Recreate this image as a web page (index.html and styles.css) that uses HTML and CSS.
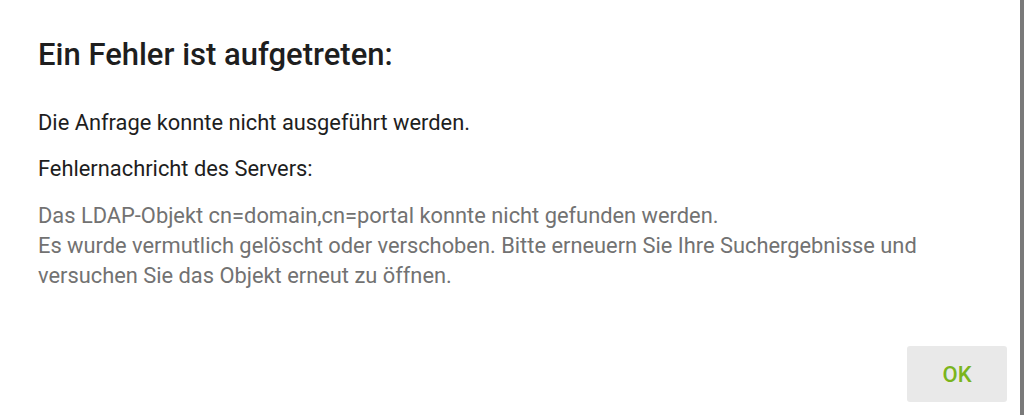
FILE: index.html
```html
<!DOCTYPE html>
<html lang="de">
<head>
<meta charset="utf-8">
<title>Fehler</title>
<link rel="stylesheet" href="styles.css">
</head>
<body>
<div class="screen">
  <div class="dialog">
    <div class="content">
      <h1 class="title">Ein Fehler ist aufgetreten:</h1>
      <p class="text">Die Anfrage konnte nicht ausgeführt werden.</p>
      <p class="text">Fehlernachricht des Servers:</p>
      <p class="text muted">Das LDAP-Objekt cn=domain,cn=portal konnte nicht gefunden werden.<br>Es wurde vermutlich gelöscht oder verschoben. Bitte erneuern Sie Ihre Suchergebnisse und versuchen Sie das Objekt erneut zu öffnen.</p>
    </div>
    <div class="actions">
      <button class="btn-ok" type="button">OK</button>
    </div>
  </div>
  <div class="edge"></div>
</div>
</body>
</html>
```

FILE: styles.css
```css
html, body {
  margin: 0;
  padding: 0;
  background: #ffffff;
}

body {
  font-family: Roboto, "Liberation Sans", Arial, sans-serif;
  width: 1024px;
  height: 415px;
  overflow: hidden;
}

.screen {
  display: grid;
  grid-template-columns: 1020px 4px;
  height: 415px;
}

.dialog {
  display: flex;
  flex-direction: column;
  justify-content: space-between;
  padding: 35px 13px 13px 38px;
  box-sizing: border-box;
  height: 415px;
}

.content {
  padding-right: 25px;
}

.title {
  margin: 0 0 33px 0;
  font-size: 31px;
  line-height: 40px;
  font-weight: 500;
  color: #1e1e1e;
}

.text {
  margin: 0 0 16px 0;
  font-size: 21.85px;
  line-height: 30px;
  color: #1e1e1e;
}

.muted {
  margin-top: 17px;
  color: #727272;
}

.actions {
  display: flex;
  justify-content: flex-end;
}

.btn-ok {
  width: 100px;
  height: 56px;
  border: none;
  border-radius: 3px;
  background: #e9e9e9;
  color: #7ab51d;
  font-family: Roboto, "Liberation Sans", Arial, sans-serif;
  font-size: 22px;
  font-weight: 500;
  padding: 0;
}

.edge {
  background: #7a7a7a;
}
```
